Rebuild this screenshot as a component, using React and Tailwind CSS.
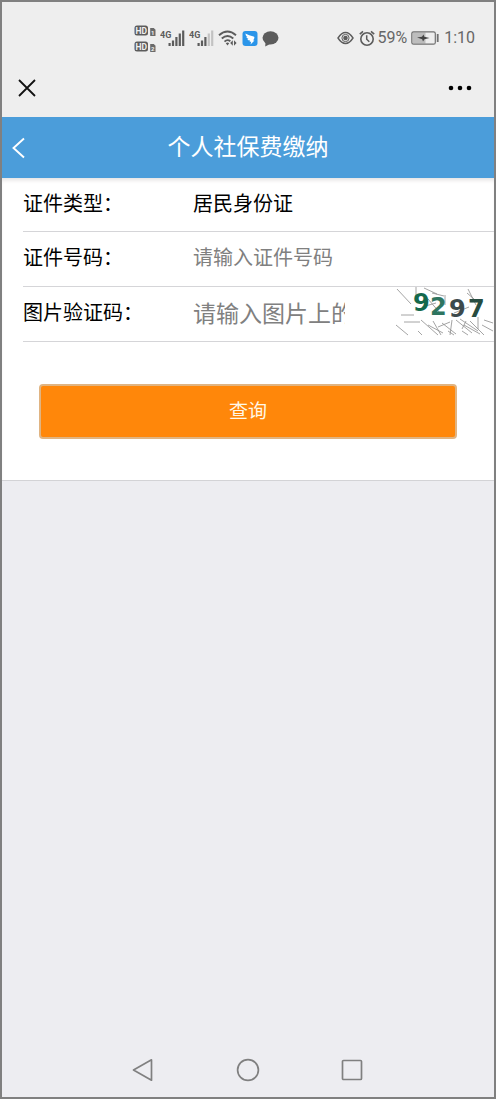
import React, { useState } from "react";

const HdBadge = ({ sim }) => (
  <svg className="h-[11px] w-[22px]" viewBox="0 0 22 11" aria-hidden="true">
    <rect x="0.5" y="0.5" width="13.5" height="10" rx="2.5" fill="#5c5c5c" />
    <text
      x="7.2"
      y="8.8"
      textAnchor="middle"
      fontSize="8.5"
      fontWeight="700"
      fontFamily="Roboto, sans-serif"
      fill="#f0f0f0"
    >
      HD
    </text>
    <path d="M16.2 3h3.6l1.7 1.8V11h-5.3z" fill="#6a6a6a" />
    <text
      x="18.8"
      y="9.8"
      textAnchor="middle"
      fontSize="6"
      fontWeight="700"
      fontFamily="Roboto, sans-serif"
      fill="#f0f0f0"
    >
      {sim}
    </text>
  </svg>
);

const Signal = ({ bars }) => (
  <svg className="h-[18px] w-[25px]" viewBox="0 0 25 18" aria-hidden="true">
    <text
      x="0"
      y="8.5"
      fontSize="9"
      fontWeight="700"
      fontFamily="'Liberation Sans Narrow', Roboto, sans-serif"
      fill="#5c5c5c"
    >
      4G
    </text>
    {[3, 5.5, 9, 12.5, 15.5].map((h, i) => (
      <rect
        key={h}
        x={8.5 + i * 3.4}
        y={17 - h}
        width="2.2"
        height={h}
        fill={i < bars ? "#5c5c5c" : "#c2c2c2"}
      />
    ))}
  </svg>
);

const StatusBar = () => (
  <div className="flex h-[58px] items-center justify-between pt-[14px] pr-[19px] pl-[132px]">
    <div className="flex items-center gap-1">
      <div className="flex flex-col gap-[5px]">
        <HdBadge sim="1" />
        <HdBadge sim="2" />
      </div>
      <Signal bars={5} />
      <Signal bars={3} />
      {/* Wifi */}
      <svg className="h-[18px] w-[20px]" viewBox="0 0 20 18" fill="none" aria-hidden="true">
        <g stroke="#5c5c5c" strokeWidth="1.9">
          <path d="M1 6.2Q9.5-1 18 6.2" />
          <path d="M3.8 9.5Q9.5 4.3 15.3 9.5" />
          <path d="M6.5 12.6Q9.5 9.8 12.3 12.3" />
        </g>
        <path d="M7.8 14.3Q9.5 12.8 11.2 14.3L9.5 16.5z" fill="#5c5c5c" />
        <path d="M14.8 11.3l-2.6 2.7 2.6 2.7zM16 11.3l2.6 2.7-2.6 2.7z" fill="#5c5c5c" />
      </svg>
      {/* Messenger */}
      <svg className="h-[17px] w-[16px]" viewBox="0 0 16 17" aria-hidden="true">
        <rect x="0.5" y="1" width="15" height="15" rx="3" fill="#2b95e9" />
        <path
          d="M3.4 3.4Q7 5.4 11.6 6.6Q12.8 7 12.3 8.2L11.2 10.4h1.3L8.5 14.6l.7-2.8H7.6l.5-1.2Q6 10.6 5.3 9.1l1.3-.1Q4.5 8.2 4.2 6.7l1.2.2Q3.4 5.5 3.4 3.4z"
          fill="#fff"
        />
      </svg>
      <svg className="h-[17px] w-[17px]" viewBox="0 0 17 17" aria-hidden="true">
        <ellipse cx="8.5" cy="7.8" rx="8" ry="6.6" fill="#5c5c5c" />
        <path d="M3.5 11.5L3.2 16.5L9 13.5z" fill="#5c5c5c" />
      </svg>
    </div>

    <div className="flex items-center font-[Roboto,sans-serif] text-[16px] leading-5 text-[#666]">
      <svg className="mr-[5px] h-[16px] w-[17px]" viewBox="0 0 17 16" fill="none" aria-hidden="true">
        <path
          d="M1 8Q4.5 2.5 8.5 2.5T16 8Q12.5 13.5 8.5 13.5T1 8z"
          stroke="#5c5c5c"
          strokeWidth="1.4"
        />
        <circle cx="8.5" cy="8" r="3.6" stroke="#5c5c5c" strokeWidth="1" />
        <circle cx="8.5" cy="8" r="2.3" fill="#5c5c5c" />
      </svg>
      <svg className="mr-0.5 h-[17px] w-[16px]" viewBox="0 0 16 17" fill="none" stroke="#5c5c5c" aria-hidden="true">
        <circle cx="8" cy="9" r="6.2" strokeWidth="1.6" />
        <path d="M7.7 5.3V9.2L10.3 11.8" strokeWidth="1.5" />
        <path d="M.8 4.2L4 1.3M12 1.3L15.2 4.2" strokeWidth="1.6" />
      </svg>
      <span>59%</span>
      <svg className="mr-[5px] ml-1 h-[14px] w-[28px]" viewBox="0 0 28 14" aria-hidden="true">
        <rect x="1.5" y="1.5" width="13" height="11" fill="#bdbdbd" />
        <rect x="0.8" y="0.8" width="23.5" height="12.4" rx="1.8" fill="none" stroke="#707070" strokeWidth="1.2" />
        <rect x="25.8" y="3" width="1.8" height="8" fill="#707070" />
        <path d="M6 6.5L11 5.7L12.5 3.5L13.3 5.7L18.5 7L13.5 8.3L12 10.5L11.2 8.2z" fill="#444" />
      </svg>
      <span>1:10</span>
    </div>
  </div>
);

const BrowserBar = () => (
  <div className="flex h-[57px] items-center justify-between pr-[22px] pb-0.5 pl-4">
    <button type="button" aria-label="关闭">
      <svg className="h-[18px] w-[18px]" viewBox="0 0 18 18" aria-hidden="true">
        <path d="M1 1L17 17M17 1L1 17" stroke="#111" strokeWidth="1.8" />
      </svg>
    </button>
    <button type="button" aria-label="更多">
      <svg className="h-[6px] w-[24px]" viewBox="0 0 24 6" fill="#000" aria-hidden="true">
        <circle cx="3" cy="3" r="2.3" />
        <circle cx="12" cy="3" r="2.3" />
        <circle cx="21" cy="3" r="2.3" />
      </svg>
    </button>
  </div>
);

const Captcha = () => (
  <svg
    className="h-[50px] w-[100px]"
    viewBox="0 0 100 50"
    role="img"
    aria-label="图片验证码"
  >
    <g stroke="#8d8d8d" strokeWidth="0.8" fill="none">
      <path d="M3 2L17 17M2 38L14 48M7 28H20M10 35H26M30 1L43 7M38 6L50 9M22 0V12" />
      <path d="M27 33L44 48M34 38L49 46M39 34L47 48M48 36L62 47M58 33L56 48M54 44L60 48M44 40L56 35M24 44L28 48" />
      <path d="M74 2L82 18M73 6L80 12M62 33L78 46M66 32L84 44M70 38L86 47M76 34L90 48M84 30L84 42M68 44L74 48M90 33L99 36M88 38L99 44M72 34L68 42" />
      <path d="M51 8V18M34 12L46 26M60 26L75 20M28 20L42 16" />
    </g>
    <g fontFamily="'DejaVu Sans', sans-serif" fontWeight="700" fontSize="24">
      <text x="19" y="24" fill="#14694c">9</text>
      <text x="36" y="28" fill="#2e7560">2</text>
      <text x="55" y="30" fill="#3d4a4c">9</text>
      <text x="74" y="30" fill="#274c40">7</text>
    </g>
  </svg>
);

const rowClass = "flex items-center border-b border-[#d5d5d8] pb-1";
const labelClass = "w-[170px] shrink-0 text-[20px] leading-8";

const PaymentForm = () => {
  const [idType, setIdType] = useState("resident");
  const [idNumber, setIdNumber] = useState("");
  const [code, setCode] = useState("");

  return (
    <form
      className="border-b border-[#d3d3d6] bg-white pb-[41px] text-black shadow-[inset_0_4px_4px_-2px_#e2e0e0]"
      onSubmit={(e) => e.preventDefault()}
    >
      <div className="pl-[21px]">
        <div className={`${rowClass} h-[54px]`}>
          <label htmlFor="id-type" className={labelClass}>
            证件类型：
          </label>
          <select
            id="id-type"
            value={idType}
            onChange={(e) => setIdType(e.target.value)}
            className="min-w-0 flex-1 appearance-none bg-transparent text-[20px] leading-8 outline-none"
          >
            <option value="resident">居民身份证</option>
          </select>
        </div>
        <div className={`${rowClass} h-[55px]`}>
          <label htmlFor="id-number" className={labelClass}>
            证件号码：
          </label>
          <input
            id="id-number"
            type="text"
            value={idNumber}
            onChange={(e) => setIdNumber(e.target.value)}
            placeholder="请输入证件号码"
            className="min-w-0 flex-1 text-[20px] leading-8 outline-none placeholder:text-[#808080]"
          />
        </div>
        <div className={`${rowClass} h-[55px]`}>
          <label htmlFor="captcha" className={labelClass}>
            图片验证码：
          </label>
          <input
            id="captcha"
            type="text"
            value={code}
            onChange={(e) => setCode(e.target.value)}
            placeholder="请输入图片上的字符"
            className="mr-[49px] min-w-0 flex-1 text-[23px] leading-8 outline-none placeholder:text-[#808080]"
          />
          <Captcha />
        </div>
      </div>
      <div className="px-[37px] pt-[42px]">
        <button
          type="submit"
          className="h-[55px] w-full rounded-[4px] border-2 border-[#e0b482] bg-[#ff870a] pb-0.5 text-[19px] text-[#fff8e8]"
        >
          查询
        </button>
      </div>
    </form>
  );
};

const SystemNav = () => (
  <nav className="flex h-[54px] items-center justify-center gap-20" aria-label="系统导航">
    <button type="button" aria-label="返回">
      <svg className="h-6 w-6" viewBox="0 0 24 24" fill="none" stroke="#808080" strokeWidth="1.7" strokeLinejoin="round" aria-hidden="true">
        <path d="M1.5 12L19.5 1.8V22.2z" />
      </svg>
    </button>
    <button type="button" aria-label="主页">
      <svg className="h-6 w-6" viewBox="0 0 24 24" fill="none" stroke="#808080" strokeWidth="1.7" aria-hidden="true">
        <circle cx="12" cy="12" r="10.4" />
      </svg>
    </button>
    <button type="button" aria-label="最近任务">
      <svg className="h-6 w-6" viewBox="0 0 24 24" fill="none" stroke="#808080" strokeWidth="1.7" aria-hidden="true">
        <rect x="2.5" y="2.5" width="19" height="19" rx="1" />
      </svg>
    </button>
  </nav>
);

const App = () => {
  return (
    <div
      lang="zh-CN"
      className="flex min-h-screen flex-col bg-white pr-px pb-px font-['Noto_Sans_CJK_SC',sans-serif]"
    >
      <div className="flex flex-1 flex-col border-2 border-[#808080] bg-[#ededf1]">
        <div className="bg-[#eee]">
          <StatusBar />
          <BrowserBar />
        </div>

        <header className="flex h-[61px] items-center bg-[#4b9dda] px-2 text-white">
          <button type="button" className="w-8" aria-label="返回">
            <svg className="h-[22px] w-[16px]" viewBox="0 0 16 22" fill="none" aria-hidden="true">
              <path d="M14 1.5L3.5 11L14 20.5" stroke="#fff" strokeWidth="1.9" />
            </svg>
          </button>
          <h1 className="flex-1 pr-8 pb-1.5 text-center text-[23px] leading-8">
            个人社保费缴纳
          </h1>
        </header>

        <main className="flex-1">
          <PaymentForm />
        </main>

        <SystemNav />
      </div>
    </div>
  );
};

export default App;
